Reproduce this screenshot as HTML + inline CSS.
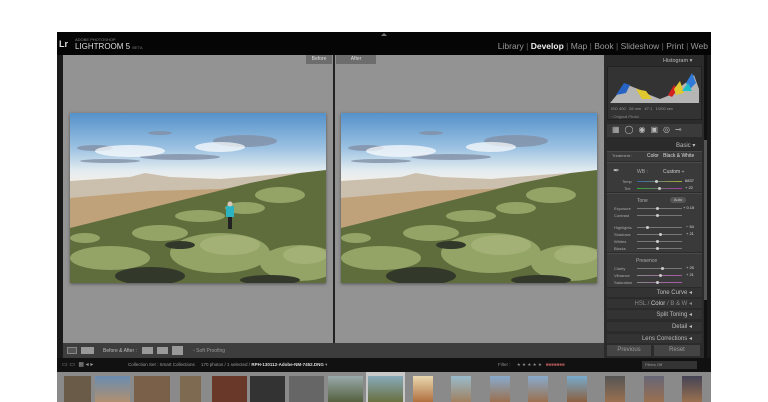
<!DOCTYPE html>
<html><head><meta charset="utf-8"><style>
*{margin:0;padding:0;box-sizing:border-box}
body{width:768px;height:402px;background:#fff;position:relative;overflow:hidden;font-family:"Liberation Sans",sans-serif}
.a{position:absolute}
.t{position:absolute;font-size:5px;color:#aaa;white-space:nowrap}
.sec{position:absolute;left:607px;width:95px;background:#3a3a3a;border-top:1px solid #4a4a4a}
.sl{position:absolute;height:1px;background:#777}
.kn{position:absolute;width:3px;height:3px;background:#ccc;border-radius:50%}
.hd{position:absolute;left:607px;width:95px;height:10px;background:#333;border-top:1px solid #2a2a2a;font-size:6px;color:#bbb;text-align:right;padding-right:10px;line-height:10px}
.th{position:absolute;top:376px;height:26px;background:#7a6a5a}
.photo{position:absolute;top:113px;width:256px;height:170px;box-shadow:0 1px 3px #555;background:linear-gradient(180deg,#5591ca 0px,#9cc2e2 35px,#e4ecf0 58px,#f6f0e6 72px,#f0e4d2 90px)}
.photo svg{position:absolute;left:0;top:0}
</style></head><body>
<div class="a" style="left:57px;top:32px;width:654px;height:370px;background:#1a1a1a"></div>
<div class="a" style="left:57px;top:32px;width:654px;height:23px;background:#050505"></div>
<div class="a" style="left:59px;top:39px;font-size:9px;color:#ddd;font-weight:bold">Lr</div>
<div class="a" style="left:75px;top:37px;font-size:4px;color:#888">ADOBE PHOTOSHOP</div>
<div class="a" style="left:75px;top:42px;font-size:8px;color:#ddd">LIGHTROOM 5 <span style="font-size:4px;color:#777">BETA</span></div>
<div class="a" style="right:60px;top:41px;font-size:8.5px;color:#999;white-space:nowrap">Library <span style="color:#666">|</span> <b style="color:#eee">Develop</b> <span style="color:#666">|</span> Map <span style="color:#666">|</span> Book <span style="color:#666">|</span> Slideshow <span style="color:#666">|</span> Print <span style="color:#666">|</span> Web</div>
<div class="a" style="left:381px;top:33px;width:0;height:0;border-left:3px solid transparent;border-right:3px solid transparent;border-bottom:3px solid #777"></div>
<div class="a" style="left:63px;top:55px;width:541px;height:288px;background:#939393"></div>
<div class="a" style="left:333px;top:55px;width:2px;height:288px;background:#222"></div>
<div class="a" style="left:306px;top:55px;width:26px;height:9px;background:#6d6d6d;font-size:5px;color:#ddd;text-align:center;line-height:9px">Before</div>
<div class="a" style="left:336px;top:55px;width:40px;height:9px;background:#6d6d6d;font-size:5px;color:#ddd;text-align:center;line-height:9px">After</div>

<div class="photo" style="left:70px"><svg width="256" height="170">
<g fill="#8290a6" opacity=".8"><ellipse cx="175" cy="28" rx="32" ry="6"/><ellipse cx="25" cy="35" rx="18" ry="3"/><ellipse cx="110" cy="44" rx="40" ry="3"/><ellipse cx="40" cy="48" rx="30" ry="2"/><ellipse cx="90" cy="20" rx="12" ry="2"/></g>
<g fill="#fff" opacity=".7"><ellipse cx="150" cy="34" rx="25" ry="5"/><ellipse cx="60" cy="38" rx="35" ry="6"/></g>
<path d="M0 68 L60 64 L75 60 L100 64 L150 66 L200 62 L256 58 L256 170 L0 170Z" fill="#cbbfae"/>
<path d="M0 85 L80 78 L150 76 L256 64 L256 170 L0 170Z" fill="#c0a27a"/>
<path d="M0 115 L60 100 L120 85 L180 70 L230 60 L256 57 L256 170 L0 170Z" fill="#5f6c3c"/>
<g fill="#93a466"><ellipse cx="150" cy="140" rx="50" ry="20"/><ellipse cx="230" cy="150" rx="40" ry="18"/><ellipse cx="40" cy="145" rx="40" ry="12"/><ellipse cx="210" cy="82" rx="25" ry="8"/><ellipse cx="90" cy="120" rx="28" ry="8"/><ellipse cx="130" cy="103" rx="25" ry="6"/><ellipse cx="175" cy="95" rx="20" ry="6"/><ellipse cx="15" cy="125" rx="15" ry="5"/></g>
<g fill="#a8b47a" opacity=".8"><ellipse cx="160" cy="132" rx="30" ry="10"/><ellipse cx="235" cy="142" rx="22" ry="9"/></g>
<g fill="#33392a"><ellipse cx="80" cy="163" rx="35" ry="9"/><ellipse cx="200" cy="167" rx="30" ry="5"/><ellipse cx="110" cy="132" rx="15" ry="4"/></g>
<rect x="156" y="93" width="8" height="11" fill="#2bb3c2"/><rect x="158" y="104" width="4" height="12" fill="#222"/><circle cx="160" cy="91" r="2.5" fill="#d8c8b8"/>
</svg></div>

<div class="photo" style="left:341px"><svg width="256" height="170">
<g fill="#8290a6" opacity=".8"><ellipse cx="175" cy="28" rx="32" ry="6"/><ellipse cx="25" cy="35" rx="18" ry="3"/><ellipse cx="110" cy="44" rx="40" ry="3"/><ellipse cx="40" cy="48" rx="30" ry="2"/><ellipse cx="90" cy="20" rx="12" ry="2"/></g>
<g fill="#fff" opacity=".7"><ellipse cx="150" cy="34" rx="25" ry="5"/><ellipse cx="60" cy="38" rx="35" ry="6"/></g>
<path d="M0 68 L60 64 L75 60 L100 64 L150 66 L200 62 L256 58 L256 170 L0 170Z" fill="#cbbfae"/>
<path d="M0 85 L80 78 L150 76 L256 64 L256 170 L0 170Z" fill="#c0a27a"/>
<path d="M0 115 L60 100 L120 85 L180 70 L230 60 L256 57 L256 170 L0 170Z" fill="#5f6c3c"/>
<g fill="#93a466"><ellipse cx="150" cy="140" rx="50" ry="20"/><ellipse cx="230" cy="150" rx="40" ry="18"/><ellipse cx="40" cy="145" rx="40" ry="12"/><ellipse cx="210" cy="82" rx="25" ry="8"/><ellipse cx="90" cy="120" rx="28" ry="8"/><ellipse cx="130" cy="103" rx="25" ry="6"/><ellipse cx="175" cy="95" rx="20" ry="6"/><ellipse cx="15" cy="125" rx="15" ry="5"/></g>
<g fill="#a8b47a" opacity=".8"><ellipse cx="160" cy="132" rx="30" ry="10"/><ellipse cx="235" cy="142" rx="22" ry="9"/></g>
<g fill="#33392a"><ellipse cx="80" cy="163" rx="35" ry="9"/><ellipse cx="200" cy="167" rx="30" ry="5"/><ellipse cx="110" cy="132" rx="15" ry="4"/></g>
</svg></div>

<div class="a" style="left:63px;top:343px;width:541px;height:15px;background:#3d3d3d"></div>
<div class="a" style="left:67px;top:347px;width:10px;height:7px;border:1px solid #888;background:#555"></div>
<div class="a" style="left:81px;top:347px;width:13px;height:7px;background:#999"></div>
<div class="t" style="left:103px;top:348px;color:#bbb">Before &amp; After :</div>
<div class="a" style="left:142px;top:347px;width:11px;height:7px;background:#999"></div>
<div class="a" style="left:157px;top:347px;width:11px;height:7px;background:#999"></div>
<div class="a" style="left:172px;top:346px;width:11px;height:9px;background:#999"></div>
<div class="t" style="left:193px;top:348px;color:#999">▫ Soft Proofing</div>
<div class="a" style="left:604px;top:55px;width:100px;height:303px;background:#2b2b2b"></div>
<div class="a" style="left:704px;top:55px;width:3px;height:303px;background:#111"></div>
<div class="a" style="left:704px;top:140px;width:3px;height:160px;background:#555"></div>
<div class="t" style="left:663px;top:58px;color:#bbb;font-size:5.5px">Histogram ▾</div>
<div class="a" style="left:607px;top:66px;width:95px;height:54px;background:#333;border:1px solid #222"></div>
<svg class="a" style="left:610px;top:69px" width="89" height="34"><rect width="89" height="34" fill="#333"/>
<path d="M0 34 L10 22 L18 16 L28 20 L40 26 L50 30 L60 26 L70 18 L78 12 L84 6 L89 20 L89 34Z" fill="#b5b5b5"/>
<path d="M6 26 L14 14 L20 16 L16 24Z" fill="#2763c4"/>
<path d="M26 20 L36 22 L42 30 L32 30Z" fill="#e0c830"/>
<path d="M58 26 L64 16 L68 20 L62 28Z" fill="#d02020"/><path d="M64 20 L70 12 L74 24 L66 26Z" fill="#e0c830"/>
<path d="M76 14 L82 4 L86 14 L80 20Z" fill="#2f7ad8"/><path d="M72 22 L78 14 L82 22Z" fill="#20c0c8"/></svg>
<div class="t" style="left:611px;top:106px;font-size:4px;color:#999">ISO 400 &nbsp; 28 mm &nbsp; f/7.1 &nbsp; 1/200 sec</div>
<div class="t" style="left:611px;top:114px;font-size:4px;color:#888">▫ Original Photo</div>
<div class="a" style="left:607px;top:124px;width:95px;height:13px;background:#3a3a3a"></div>
<div class="t" style="left:612px;top:125px;font-size:8px;color:#bbb;letter-spacing:5px">▦◯◉▣◎⊸</div>
<div class="t" style="left:676px;top:142px;color:#bbb;font-size:6px">Basic ▾</div>
<div class="sec" style="top:151px;height:10px"></div>
<div class="t" style="left:612px;top:153px;font-size:4px">Treatment :</div>
<div class="t" style="left:647px;top:153px;color:#ddd">Color &nbsp; Black &amp; White</div>
<div class="sec" style="top:162px;height:30px"></div>
<div class="t" style="left:613px;top:166px;font-size:8px;color:#bbb">✒</div>
<div class="t" style="left:637px;top:169px">WB :</div><div class="t" style="left:663px;top:169px;color:#ccc">Custom ÷</div>
<div class="t" style="left:622px;top:179px;font-size:4px">Temp</div><div class="sl" style="left:637px;top:181px;width:45px;background:linear-gradient(90deg,#36a,#aa3)"></div><div class="kn" style="left:655px;top:180px"></div><div class="t" style="left:685px;top:178px;font-size:4px;color:#ddd">6837</div>
<div class="t" style="left:624px;top:186px;font-size:4px">Tint</div><div class="sl" style="left:637px;top:188px;width:45px;background:linear-gradient(90deg,#3a3,#a3a)"></div><div class="kn" style="left:658px;top:187px"></div><div class="t" style="left:685px;top:185px;font-size:4px;color:#ddd">+ 22</div>
<div class="sec" style="top:193px;height:59px"></div>
<div class="t" style="left:637px;top:198px">Tone</div><div class="a" style="left:670px;top:197px;width:16px;height:6px;background:#555;border-radius:3px;font-size:4px;color:#ccc;text-align:center;line-height:6px">Auto</div>
<div class="t" style="left:614px;top:206px;font-size:4px">Exposure</div><div class="sl" style="left:637px;top:208px;width:45px"></div><div class="kn" style="left:656px;top:207px"></div><div class="t" style="left:683px;top:205px;font-size:4px;color:#ddd">+ 0.15</div>
<div class="t" style="left:614px;top:213px;font-size:4px">Contrast</div><div class="sl" style="left:637px;top:215px;width:45px"></div><div class="kn" style="left:656px;top:214px"></div>
<div class="t" style="left:614px;top:225px;font-size:4px">Highlights</div><div class="sl" style="left:637px;top:227px;width:45px"></div><div class="kn" style="left:646px;top:226px"></div><div class="t" style="left:686px;top:224px;font-size:4px;color:#ddd">− 54</div>
<div class="t" style="left:614px;top:232px;font-size:4px">Shadows</div><div class="sl" style="left:637px;top:234px;width:45px"></div><div class="kn" style="left:659px;top:233px"></div><div class="t" style="left:686px;top:231px;font-size:4px;color:#ddd">+ 21</div>
<div class="t" style="left:614px;top:239px;font-size:4px">Whites</div><div class="sl" style="left:637px;top:241px;width:45px"></div><div class="kn" style="left:656px;top:240px"></div>
<div class="t" style="left:614px;top:246px;font-size:4px">Blacks</div><div class="sl" style="left:637px;top:248px;width:45px"></div><div class="kn" style="left:656px;top:247px"></div>
<div class="sec" style="top:253px;height:34px"></div>
<div class="t" style="left:636px;top:258px">Presence</div>
<div class="t" style="left:614px;top:266px;font-size:4px">Clarity</div><div class="sl" style="left:637px;top:268px;width:45px"></div><div class="kn" style="left:661px;top:267px"></div><div class="t" style="left:686px;top:265px;font-size:4px;color:#ddd">+ 25</div>
<div class="t" style="left:614px;top:273px;font-size:4px">Vibrance</div><div class="sl" style="left:637px;top:275px;width:45px;background:linear-gradient(90deg,#888,#a5a)"></div><div class="kn" style="left:659px;top:274px"></div><div class="t" style="left:686px;top:272px;font-size:4px;color:#ddd">+ 21</div>
<div class="t" style="left:614px;top:280px;font-size:4px">Saturation</div><div class="sl" style="left:637px;top:282px;width:45px;background:linear-gradient(90deg,#888,#a5a)"></div><div class="kn" style="left:656px;top:281px"></div>
<div class="hd" style="top:287px">Tone Curve ◂</div>
<div class="hd" style="top:298px;color:#888">HSL / <span style="color:#ccc">Color</span> / B &amp; W ◂</div>
<div class="hd" style="top:309px">Split Toning ◂</div>
<div class="hd" style="top:321px">Detail ◂</div>
<div class="hd" style="top:333px">Lens Corrections ◂</div>
<div class="a" style="left:607px;top:345px;width:44px;height:11px;background:#444;font-size:6px;color:#999;text-align:center;line-height:11px">Previous</div>
<div class="a" style="left:654px;top:345px;width:46px;height:11px;background:#444;font-size:6px;color:#999;text-align:center;line-height:11px">Reset</div>
<div class="a" style="left:57px;top:358px;width:654px;height:14px;background:#111"></div>
<div class="t" style="left:62px;top:361px;font-size:6px;color:#999">▭ ▭ &nbsp;▦ ◂ ▸</div>
<div class="t" style="left:128px;top:362px;font-size:4.5px;color:#999">Collection Set : Smart Collections &nbsp;&nbsp;&nbsp; 170 photos / 1 selected / <b style="color:#ddd">RPH-130112-Adobe-NM-7452.DNG</b> ▾</div>
<div class="t" style="left:498px;top:362px;font-size:4.5px;color:#888">Filter : &nbsp;&nbsp;&nbsp; ★ ★ ★ ★ ★ &nbsp; <span style="color:#a55">■■■■■■■</span></div>
<div class="a" style="left:642px;top:361px;width:55px;height:8px;background:#333;font-size:4px;color:#999;padding-left:3px;line-height:8px">Filters Off</div>
<div class="a" style="left:57px;top:372px;width:654px;height:30px;background:#8a8a8a"></div>
<div class="a" style="left:366px;top:372px;width:39px;height:30px;background:#c8c8c8"></div>
<div class="th" style="left:64px;width:27px;background:#6a5a48"></div>
<div class="th" style="left:95px;width:35px;background:linear-gradient(#6a8cb0,#b09070)"></div>
<div class="th" style="left:134px;width:36px;background:#7a6048"></div>
<div class="th" style="left:180px;width:21px;background:#7e6a50"></div>
<div class="th" style="left:212px;width:35px;background:#6a3828"></div>
<div class="th" style="left:250px;width:35px;background:#333"></div>
<div class="th" style="left:289px;width:35px;background:#666"></div>
<div class="th" style="left:328px;width:35px;background:linear-gradient(#9aa,#556040)"></div>
<div class="th" style="left:368px;width:35px;background:linear-gradient(#8ab,#6a7040)"></div>
<div class="th" style="left:413px;width:20px;background:linear-gradient(#e9d8b0,#b07040)"></div>
<div class="th" style="left:451px;width:20px;background:linear-gradient(#9bc,#a08060)"></div>
<div class="th" style="left:490px;width:20px;background:linear-gradient(#8ac,#9a7050)"></div>
<div class="th" style="left:528px;width:20px;background:linear-gradient(#8ac,#9a7050)"></div>
<div class="th" style="left:567px;width:20px;background:linear-gradient(#7ac,#8a6040)"></div>
<div class="th" style="left:605px;width:20px;background:linear-gradient(#555,#9a7050)"></div>
<div class="th" style="left:644px;width:20px;background:linear-gradient(#667,#9a7050)"></div>
<div class="th" style="left:682px;width:20px;background:linear-gradient(#445,#9a7050)"></div>
</body></html>
